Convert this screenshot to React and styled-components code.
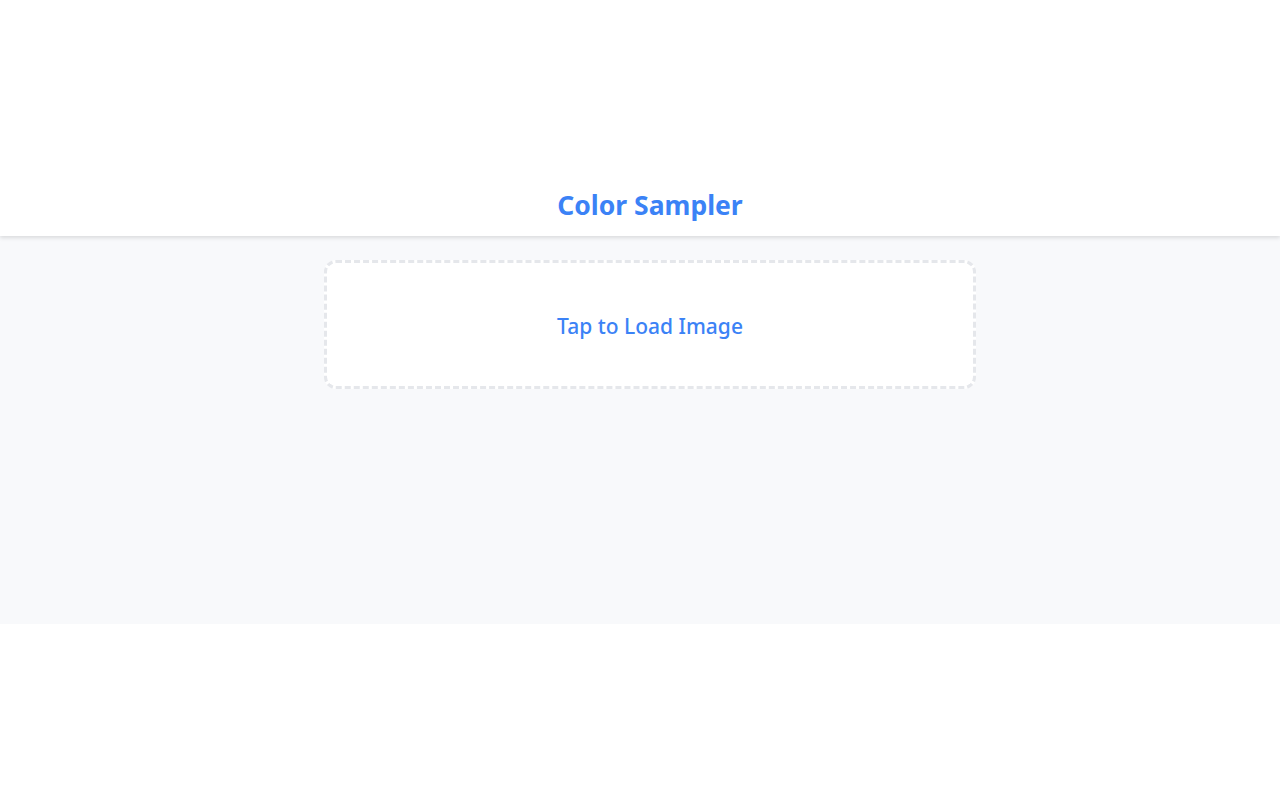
import styled, { createGlobalStyle } from 'styled-components';

const GlobalStyle = createGlobalStyle`
  body {
    margin: 0;
    background: #ffffff;
    font-family: "Noto Sans", "Open Sans", sans-serif;
  }
`;

function App() {
  return (
    <>
      <GlobalStyle />
      <Page>
        <Header>
          <Title>Color Sampler</Title>
        </Header>
        <Main>
          <DropZone type='button'>Tap to Load Image</DropZone>
        </Main>
      </Page>
    </>
  );
}

const Page = styled.div`
  display: flex;
  flex-direction: column;
  height: 624px;
`;

const Header = styled.header`
  height: 236px;
  display: flex;
  align-items: flex-end;
  justify-content: center;
  padding-left: 20px;
  box-sizing: border-box;
  background: #ffffff;
  box-shadow: 0 2px 4px rgba(0, 0, 0, 0.12);
  position: relative;
  z-index: 1;
`;

const Title = styled.h1`
  margin: 0 0 13px;
  font-size: 26.5px;
  font-weight: 700;
  color: #3b82f6;
`;

const Main = styled.main`
  flex: 1;
  background: #f8f9fb;
  display: flex;
  justify-content: center;
  align-items: flex-start;
  padding: 24px 0 0 20px;
`;

const DropZone = styled.button`
  width: 652px;
  height: 129px;
  padding-top: 3px;
  background: #ffffff;
  border: 3px dashed #e5e7eb;
  border-radius: 12px;
  color: #3b82f6;
  font-family: inherit;
  font-size: 21px;
  font-weight: 500;
  cursor: pointer;
`;

export default App;
